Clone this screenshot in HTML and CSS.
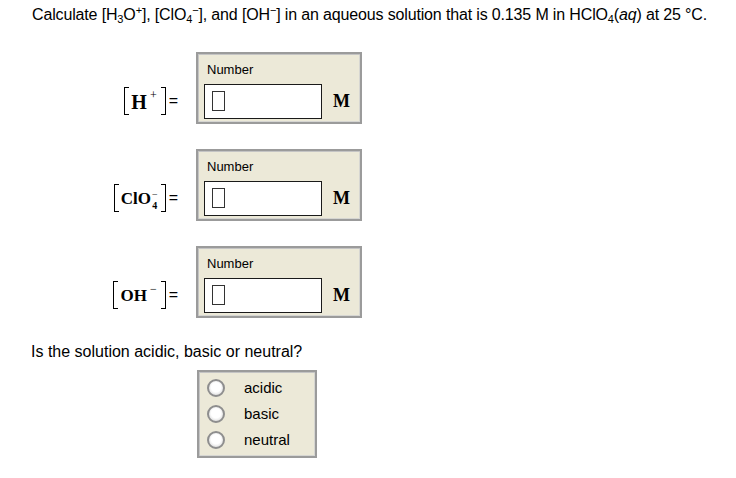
FILE: index.html
```html
<!DOCTYPE html>
<html>
<head>
<meta charset="utf-8">
<link rel="stylesheet" href="styles.css">
</head>
<body>
<div class="page">
  <p class="title">Calculate [H<sub>3</sub>O<sup>+</sup>], [ClO<sub>4</sub><sup>−</sup>], and [OH<sup>−</sup>] in an aqueous solution that is 0.135 M in HClO<sub>4</sub>(<i>aq</i>) at 25 °C.</p>

  <div class="rows">
    <div class="row">
      <div class="label">
        <span class="br br-l"></span><span class="chem">H</span><span class="chem-sup">+</span><span class="br br-r"></span><span class="eq">=</span>
      </div>
      <div class="box">
        <div class="box-cap">Number</div>
        <div class="box-line">
          <div class="input"><span class="caret"></span></div>
          <span class="unit">M</span>
        </div>
      </div>
    </div>

    <div class="row">
      <div class="label">
        <span class="br br-l"></span><span class="chem chem-sm">ClO</span><span class="chem-stack"><span class="s-top">−</span><span class="s-bot">4</span></span><span class="br br-r"></span><span class="eq">=</span>
      </div>
      <div class="box">
        <div class="box-cap">Number</div>
        <div class="box-line">
          <div class="input"><span class="caret"></span></div>
          <span class="unit">M</span>
        </div>
      </div>
    </div>

    <div class="row">
      <div class="label">
        <span class="br br-l"></span><span class="chem chem-sm">OH</span><span class="chem-sup">−</span><span class="br br-r"></span><span class="eq">=</span>
      </div>
      <div class="box">
        <div class="box-cap">Number</div>
        <div class="box-line">
          <div class="input"><span class="caret"></span></div>
          <span class="unit">M</span>
        </div>
      </div>
    </div>
  </div>

  <p class="question">Is the solution acidic, basic or neutral?</p>

  <div class="radios">
    <div class="opt"><span class="radio"></span><span class="opt-label">acidic</span></div>
    <div class="opt"><span class="radio"></span><span class="opt-label">basic</span></div>
    <div class="opt"><span class="radio"></span><span class="opt-label">neutral</span></div>
  </div>
</div>
</body>
</html>
```

FILE: styles.css
```css
html, body {
  margin: 0;
  padding: 0;
  background: #ffffff;
}

body {
  font-family: "Liberation Sans", Arial, sans-serif;
  color: #000;
  width: 736px;
  height: 478px;
  overflow: hidden;
}

.page {
  padding: 6px 0 0 32px;
}

.title {
  margin: 0;
  font-size: 16px;
  line-height: 18px;
  letter-spacing: -0.15px;
}

.title sub, .title sup {
  font-size: 11px;
  line-height: 0;
}

.title sub { vertical-align: -3px; }
.title sup { vertical-align: 6px; }

.rows {
  margin-top: 28px;
  display: flex;
  flex-direction: column;
  gap: 25px;
}

.row {
  display: flex;
  align-items: stretch;
  height: 72px;
}

.label {
  width: 146px;
  padding-right: 18px;
  display: flex;
  justify-content: flex-end;
  align-items: center;
  padding-top: 26px;
  font-family: "Liberation Serif", "Times New Roman", serif;
  font-weight: bold;
  font-size: 20px;
}

.br {
  display: inline-block;
  box-sizing: border-box;
  width: 5px;
  height: 28px;
  border: 1px solid #000;
}

.br-l {
  border-right: none;
  margin-right: 2px;
}

.br-r {
  border-left: none;
  margin-left: 1px;
}

.chem {
  line-height: 20px;
  margin-top: 2px;
}

.chem-sm {
  font-size: 17px;
}

.chem-sup {
  font-size: 12px;
  font-weight: normal;
  line-height: 12px;
  align-self: center;
  margin-top: -12px;
  padding: 0 3px 0 3px;
}

.chem-stack {
  display: inline-flex;
  flex-direction: column;
  align-items: center;
  font-size: 10px;
  line-height: 10px;
  padding: 0 2px 0 1px;
  margin-top: 4px;
}

.s-top { font-weight: normal; }
.s-bot { margin-top: 1px; }

.eq {
  font-family: "Liberation Sans", Arial, sans-serif;
  font-weight: normal;
  font-size: 16px;
  margin-left: 3px;
}

.box {
  box-sizing: border-box;
  width: 166px;
  height: 72px;
  background: #ece9d8;
  border: 2px solid #9b9b9b;
  box-shadow: inset 1px 1px 0 #c4c4c4, inset -1px -1px 0 #d6d6d2;
  padding: 8px 0 0 6px;
}

.box-cap {
  font-size: 13px;
  line-height: 16px;
  margin-left: 3px;
}

.box-line {
  display: flex;
  align-items: center;
  margin-top: 6px;
}

.input {
  box-sizing: border-box;
  width: 118px;
  height: 35px;
  background: #fff;
  border: 1px solid #1a1a1a;
  padding: 6px 0 0 7px;
}

.caret {
  display: block;
  box-sizing: border-box;
  width: 13px;
  height: 20px;
  border: 1px solid #333;
}

.unit {
  font-family: "Liberation Serif", "Times New Roman", serif;
  font-weight: bold;
  font-size: 18px;
  margin-left: 11px;
}

.question {
  margin: 25px 0 0 -1px;
  font-size: 16px;
  line-height: 18px;
}

.radios {
  box-sizing: border-box;
  margin: 9px 0 0 165px;
  width: 120px;
  height: 88px;
  background: #ece9d8;
  border: 2px solid #9b9b9b;
  box-shadow: inset 1px 1px 0 #c4c4c4, inset -1px -1px 0 #d6d6d2;
  padding: 6px 0 0 8px;
  display: flex;
  flex-direction: column;
  gap: 7px;
}

.opt {
  display: flex;
  align-items: center;
  height: 19px;
}

.radio {
  box-sizing: border-box;
  width: 18px;
  height: 18px;
  border-radius: 50%;
  border: 2px solid #8e8e8e;
  background: radial-gradient(circle at 50% 45%, #ffffff 0, #ffffff 45%, #e6e6e6 70%, #c4c4c4 100%);
}

.opt-label {
  font-size: 15px;
  margin-left: 19px;
}
```
